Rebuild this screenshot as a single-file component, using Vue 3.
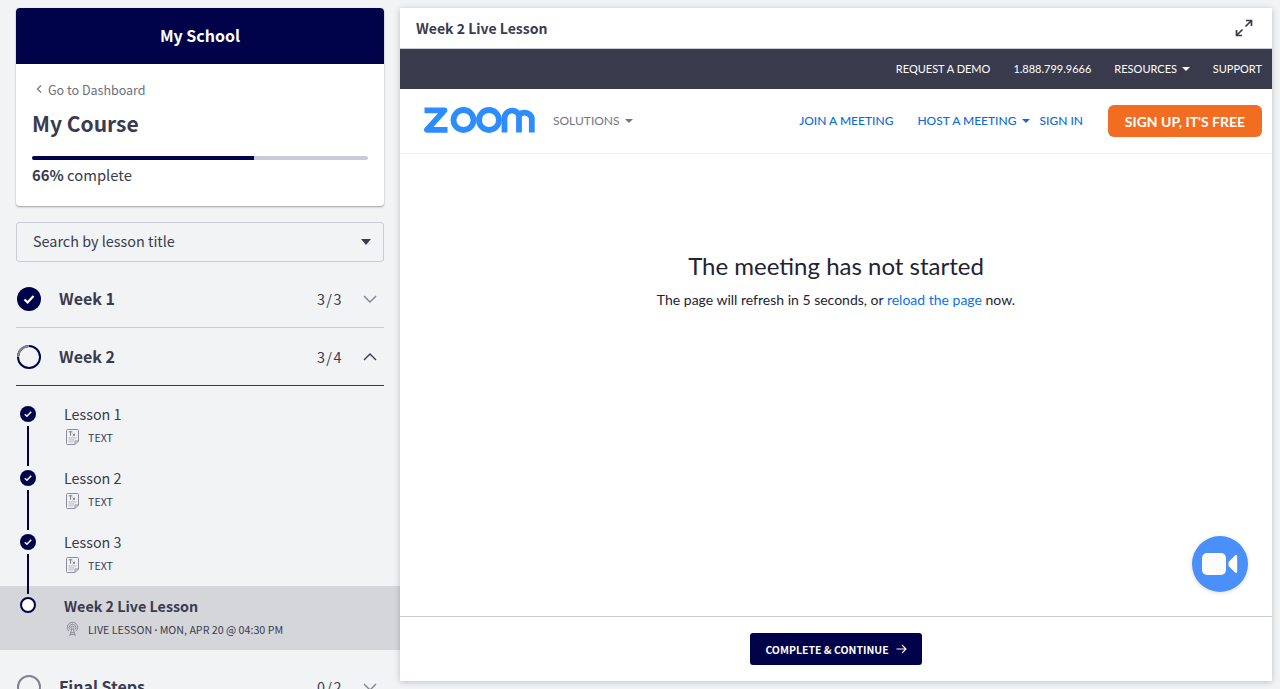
<script setup>
const doneLessons = ["Lesson 1", "Lesson 2", "Lesson 3"];
const topLinks = ["REQUEST A DEMO", "1.888.799.9666"];
</script>

<template>
  <div class="page">
    <aside class="sidebar">
      <div class="course-card">
        <div class="school">My School</div>
        <div class="course-body">
          <a class="back">
            <svg width="8" height="10" viewBox="0 0 8 10"><path d="M6 1.500 2.500 5 6 8.500" fill="none" stroke="#6b6f80" stroke-width="1.100" /></svg>
            Go to Dashboard
          </a>
          <h1>My Course</h1>
          <div class="progress"><div class="progress-fill" :style="{ width: '66%' }"></div></div>
          <p class="percent"><b>66%</b> complete</p>
        </div>
      </div>

      <div class="search">
        <span>Search by lesson title</span>
        <i class="search-caret"></i>
      </div>

      <div class="week">
        <svg class="week-icon" width="24" height="24" viewBox="0 0 24 24">
          <circle cx="12" cy="12" r="12" fill="#00034a" />
          <path d="M7.500 12.500 10.600 15.400 16.500 9" fill="none" stroke="#fff" stroke-width="2.200" />
        </svg>
        <span class="week-name">Week 1</span>
        <span class="week-count">3/3</span>
        <svg class="week-chev" width="14" height="8" viewBox="0 0 14 8"><path d="M1 1 7 7 13 1" fill="none" stroke="#80838f" stroke-width="1.400" /></svg>
      </div>

      <div class="week week-open">
        <svg class="week-icon" width="24" height="24" viewBox="0 0 24 24">
          <circle cx="12" cy="12" r="11" fill="none" stroke="#00034a" stroke-width="2" />
          <path d="M1 12A11 11 0 0 1 12 1" fill="none" stroke="#80838f" stroke-width="2" />
        </svg>
        <span class="week-name">Week 2</span>
        <span class="week-count">3/4</span>
        <svg class="week-chev" width="14" height="8" viewBox="0 0 14 8"><path d="M1 7 7 1 13 7" fill="none" stroke="#393b4f" stroke-width="1.400" /></svg>
      </div>

      <div class="lessons">
        <div v-for="name in doneLessons" :key="name" class="lesson">
          <div class="track">
            <svg width="16" height="16" viewBox="0 0 16 16">
              <circle cx="8" cy="8" r="8" fill="#00034a" />
              <path d="M4.800 8.300 7 10.300 11.200 5.800" fill="none" stroke="#fff" stroke-width="1.500" />
            </svg>
            <span class="track-line"></span>
          </div>
          <div class="lesson-text">
            <div class="lesson-name">{{ name }}</div>
            <div class="lesson-meta">
              <svg width="13" height="16" viewBox="0 0 13 16">
                <path d="M.5 1.500a1 1 0 0 1 1-1h10a1 1 0 0 1 1 1v10.500l-3.500 3.500h-7.500a1 1 0 0 1-1-1z" fill="none" stroke="#8a8d9c" />
                <path d="M9 15.500v-3.500h3.500" fill="none" stroke="#8a8d9c" />
                <path d="M2.500 9h8M2.500 11h6M2.500 13h5" stroke="#a8aab6" stroke-width=".8" />
                <path d="M2.800 2.800h3.600M4.600 2.800v4M6.600 4.800l2.400 2.200M9 4.800l-2.400 2.200" stroke="#6f7283" fill="none" stroke-width=".9" />
              </svg>
              <span>TEXT</span>
            </div>
          </div>
        </div>
        <div class="lesson lesson-active">
          <div class="track">
            <span class="current-dot"></span>
          </div>
          <div class="lesson-text">
            <div class="lesson-name">Week 2 Live Lesson</div>
            <div class="lesson-meta">
              <svg width="13" height="16" viewBox="0 0 14 16" fill="none" stroke="#7d808d" stroke-width=".9">
                <path d="M2.900 10.200a5.600 5.600 0 1 1 8.200 0" />
                <path d="M4.300 8.800a3.600 3.600 0 1 1 5.400 0" />
                <circle cx="7" cy="6.300" r="1.500" />
                <path d="M6.200 8 4 15.500M7.800 8 10 15.500M5.300 12h3.400M4.600 14h4.800" />
              </svg>
              <span>LIVE LESSON <span class="dot">·</span> MON, APR 20 @ 04:30 PM</span>
            </div>
          </div>
        </div>
      </div>

      <div class="week week-last">
        <svg class="week-icon" width="24" height="24" viewBox="0 0 24 24">
          <circle cx="12" cy="12" r="11" fill="none" stroke="#80838f" stroke-width="2" />
        </svg>
        <span class="week-name">Final Steps</span>
        <span class="week-count">0/2</span>
        <svg class="week-chev" width="14" height="8" viewBox="0 0 14 8"><path d="M1 1 7 7 13 1" fill="none" stroke="#80838f" stroke-width="1.400" /></svg>
      </div>
    </aside>

    <main class="panel">
      <header class="panel-head">
        <span>Week 2 Live Lesson</span>
        <svg width="18" height="18" viewBox="0 0 18 18" fill="none" stroke="#393b4f" stroke-width="1.700">
          <path d="M10.500 7.500 16.500 1.500M11 1.500h5.500V7M7.500 10.500 1.500 16.500M1.500 11v5.500H7" />
        </svg>
      </header>

      <div class="zoom-top">
        <a v-for="link in topLinks" :key="link">{{ link }}</a>
        <a>RESOURCES <i class="caret caret-white"></i></a>
        <a>SUPPORT</a>
      </div>

      <nav class="zoom-nav">
        <svg class="zoom-logo" width="111" height="26" viewBox="0 0 111 26" fill="none" stroke="#2d8cff" stroke-width="5.800">
          <path d="M.5 3.400H20.500L3 22.800H23.500" stroke-linejoin="round" />
          <circle cx="39.500" cy="13" r="10" />
          <circle cx="65" cy="13" r="10" />
          <path d="M80.500 25.500V11a7.600 7.600 0 0 1 14.500-3 7.600 7.600 0 0 1 12.800 3V25.500" />
          <path d="M95 8V25.500" />
        </svg>
        <a class="solutions">SOLUTIONS <i class="caret caret-grey"></i></a>
        <div class="zoom-links">
          <a>JOIN A MEETING</a>
          <a class="host">HOST A MEETING <i class="caret caret-blue"></i></a>
          <a class="signin">SIGN IN</a>
          <button class="signup">SIGN UP, IT'S FREE</button>
        </div>
      </nav>

      <section class="zoom-body">
        <h2>The meeting has not started</h2>
        <p>The page will refresh in 5 seconds, or <a>reload the page</a> now.</p>
        <div class="zoom-fab">
          <svg width="36" height="22" viewBox="0 0 36 22">
            <rect x="0" y="0" width="24" height="22" rx="5" fill="#fcfcfc" />
            <path d="M26.500 9 33 2.500c1-.9 2.200-.5 2.200 1v15c0 1.500-1.200 1.900-2.200 1L26.500 13z" fill="#fcfcfc" />
          </svg>
        </div>
      </section>

      <footer class="panel-foot">
        <button class="continue">
          COMPLETE &amp; CONTINUE
          <svg width="11" height="10" viewBox="0 0 11 10" fill="none" stroke="#fff" stroke-width="1.100"><path d="M.5 5h9.500M6 1l4 4-4 4" /></svg>
        </button>
      </footer>
    </main>
  </div>
</template>

<style>
html,
body {
  margin: 0;
  overflow: hidden;
  background: #f2f3f5;
}
</style>

<style scoped>
.page {
  display: flex;
  height: 689px;
  overflow: hidden;
  background: #f2f3f5;
  font-family: "Noto Sans CJK SC", "Liberation Sans", sans-serif;
  color: #393b4f;
}

.sidebar {
  width: 400px;
  flex: none;
  box-sizing: border-box;
  padding: 8px 16px 0;
  overflow: hidden;
}

.course-card {
  height: 198px;
  background: #fff;
  border-radius: 4px;
  box-shadow: 0 1px 2px rgba(0, 0, 0, 0.35);
  overflow: hidden;
}

.school {
  height: 56px;
  line-height: 54px;
  background: #00034a;
  color: #fff;
  font-size: 16px;
  font-weight: 700;
  text-align: center;
}

.course-body {
  padding: 15px 16px 0;
}

.back {
  display: flex;
  align-items: center;
  gap: 5px;
  height: 20px;
  padding-left: 3px;
  font-size: 12.5px;
  color: #6b6f80;
}

h1 {
  margin: 8px 0 0;
  font-size: 21px;
  line-height: 32px;
  font-weight: 700;
}

.progress {
  height: 4px;
  margin-top: 17px;
  background: #c9cbd6;
  border-radius: 2px;
  overflow: hidden;
}

.progress-fill {
  height: 100%;
  background: #00034a;
}

.percent {
  margin: 3px 0 0;
  font-size: 14.8px;
  line-height: 24px;
}

.search {
  display: flex;
  align-items: center;
  justify-content: space-between;
  box-sizing: border-box;
  height: 40px;
  margin: 16px 0 8px;
  padding: 0 12px 0 16px;
  border: 1px solid #c9cbd6;
  border-radius: 3px;
  font-size: 14.4px;
}

.search span {
  margin-top: -3px;
}

.search-caret {
  width: 0;
  height: 0;
  border: 5px solid transparent;
  border-top: 6px solid #393b4f;
  border-bottom: 0;
}

.week {
  display: flex;
  align-items: center;
  box-sizing: border-box;
  height: 58px;
  padding: 0 7px 0 1px;
  border-bottom: 1px solid #c9cbd6;
}

.week-open {
  border-bottom-color: #393b4f;
}

.week-last {
  margin-top: 8px;
}

.week-icon {
  flex: none;
}

.week-name {
  margin: -2px 0 0 18px;
  font-size: 16px;
  font-weight: 700;
}

.week-count {
  margin-left: auto;
  margin-right: 20px;
  font-size: 14.4px;
  letter-spacing: 1.5px;
}

.lessons {
  margin: 8px -16px 0;
}

.lesson {
  display: flex;
  height: 64px;
  box-sizing: border-box;
  padding: 12px 0 0 20px;
}

.track {
  position: relative;
  width: 16px;
  height: 16px;
  flex: none;
}

.track svg {
  display: block;
}

.track-line {
  position: absolute;
  left: 7px;
  top: 20px;
  width: 2px;
  height: 40px;
  background: #00034a;
}

.lesson-text {
  margin-left: 28px;
  margin-top: -3px;
}

.lesson-name {
  font-size: 14.3px;
  line-height: 22px;
}

.lesson-meta {
  display: flex;
  align-items: center;
  gap: 9px;
  height: 16px;
  margin-top: 4px;
  margin-left: 2px;
  font-size: 10.7px;
}

.dot {
  font-family: Lato, sans-serif;
}

.lesson-active {
  background: #d5d6d9;
  padding-top: 11px;
}

.lesson-active .lesson-text {
  margin-top: -2px;
}

.lesson-active .lesson-name {
  font-weight: 700;
}

.current-dot {
  display: block;
  box-sizing: border-box;
  width: 16px;
  height: 16px;
  border: 2px solid #00034a;
  border-radius: 50%;
  background: #fff;
}

.panel {
  width: 872px;
  height: 673px;
  flex: none;
  margin-top: 8px;
  display: flex;
  flex-direction: column;
  background: #fff;
  box-shadow: 0 1px 6px rgba(0, 0, 0, 0.22);
}

.panel-head {
  display: flex;
  align-items: center;
  justify-content: space-between;
  box-sizing: border-box;
  height: 41px;
  padding: 0 19px 0 16px;
  border-bottom: 1px solid #c9cbd6;
  font-size: 14px;
  font-weight: 700;
}

.zoom-top {
  display: flex;
  align-items: center;
  justify-content: flex-end;
  gap: 23px;
  height: 40px;
  padding: 0 10px 2px 0;
  box-sizing: border-box;
  background: #3a3a4d;
  color: #fff;
  font-family: Lato, sans-serif;
  font-size: 11px;
}

.caret {
  display: inline-block;
  width: 0;
  height: 0;
  margin-left: 2px;
  vertical-align: 2px;
  border: 4px solid transparent;
  border-bottom: 0;
}

.caret-white {
  border-top-color: #fff;
}

.caret-grey {
  border-top-color: #747487;
}

.caret-blue {
  margin-left: 3px;
  border-top-color: #0e6bdc;
}

.zoom-nav {
  display: flex;
  align-items: center;
  box-sizing: border-box;
  height: 65px;
  padding: 0 10px 0 24px;
  border-bottom: 1px solid #ededf1;
  font-family: Lato, sans-serif;
  font-size: 12px;
}

.zoom-logo {
  flex: none;
  margin-top: -2px;
}

.solutions {
  margin: -2px 0 0 18px;
  color: #747487;
}

.zoom-links {
  display: flex;
  align-items: center;
  margin-left: auto;
  color: #0e6bdc;
}

.zoom-links a {
  margin-top: -2px;
  font-weight: 500;
}

.host {
  margin-left: 24px;
}

.signin {
  margin-left: 9px;
}

.signup {
  height: 32px;
  width: 154px;
  margin-left: 25px;
  border: 0;
  border-radius: 6px;
  background: #f26d21;
  color: #fff;
  font-family: Lato, sans-serif;
  font-size: 14px;
  font-weight: 700;
}

.zoom-body {
  position: relative;
  flex: 1;
  text-align: center;
  font-family: Lato, sans-serif;
  color: #232333;
}

.zoom-body h2 {
  margin: 96px 0 0;
  font-size: 24px;
  line-height: 32px;
  font-weight: 400;
}

.zoom-body p {
  margin: 8px 0 0;
  font-size: 14px;
  line-height: 20px;
}

.zoom-body p a {
  color: #0e71eb;
}

.zoom-fab {
  position: absolute;
  right: 24px;
  top: 382px;
  width: 56px;
  height: 56px;
  display: flex;
  align-items: center;
  justify-content: center;
  border-radius: 50%;
  background: #4a8ffa;
  box-shadow: 0 1px 4px rgba(0, 0, 0, 0.15);
}

.panel-foot {
  display: flex;
  align-items: center;
  justify-content: center;
  height: 64px;
  border-top: 1px solid #c9cbd6;
}

.continue {
  display: flex;
  align-items: center;
  justify-content: center;
  gap: 7px;
  width: 172px;
  height: 32px;
  border: 0;
  border-radius: 3px;
  background: #00034a;
  color: #fff;
  font-family: "Noto Sans CJK SC", sans-serif;
  font-size: 10.5px;
  font-weight: 700;
}
</style>
